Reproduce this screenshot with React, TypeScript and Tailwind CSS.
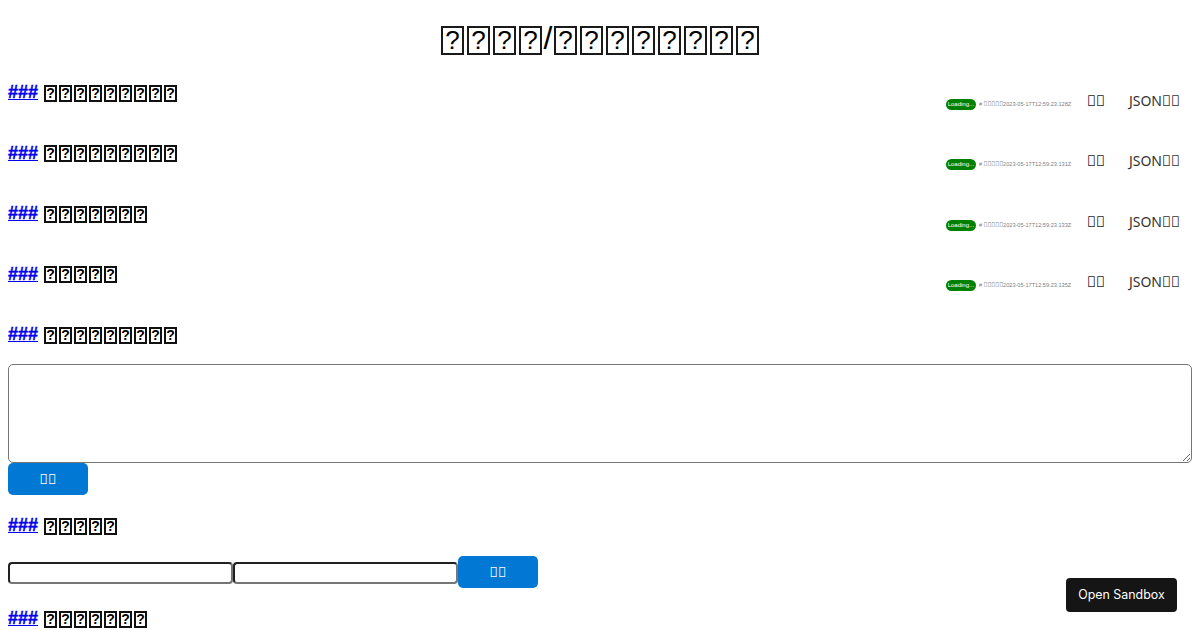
// The reference shows missing-glyph boxes, so the original wording can't be read.
const missing = (n: number) => '\uE000'.repeat(n)

function HeadBoxes({ count }: { count: number }) {
  return (
    <>
      {Array.from({ length: count }, (_, i) => (
        <span
          key={i}
          className="mx-px inline-block h-[17px] w-[13px] border-2 border-[#111111] bg-white text-center align-middle font-['Liberation_Sans',sans-serif] text-[14px] leading-[13px] font-bold text-black"
        >
          ?
        </span>
      ))}
    </>
  )
}

function TitleBoxes({ count }: { count: number }) {
  return (
    <>
      {Array.from({ length: count }, (_, i) => (
        <span
          key={i}
          className="mx-[1.5px] inline-block h-[29px] w-[23px] border-2 border-[#1a1a1a] bg-white text-center align-middle font-['Liberation_Sans',sans-serif] text-[26px] leading-[25px] font-normal text-black"
        >
          ?
        </span>
      ))}
    </>
  )
}

function Heading({ count, className = '' }: { count: number; className?: string }) {
  return (
    <h3 className={`font-['Liberation_Sans',sans-serif] text-[18px] leading-[23px] font-bold text-black ${className}`}>
      <a href="#" className="text-[#0000ee] underline [-webkit-text-stroke:0.4px_#0000ee]">###</a> <HeadBoxes count={count} />
    </h3>
  )
}

function Row({ count, time, offset }: { count: number; time: string; offset: string }) {
  return (
    <div className="flex h-[60.5px] items-start justify-between">
      <Heading count={count} />
      <div className={`flex items-baseline ${offset}`}>
        <span className="flex h-[11px] w-[30px] items-center justify-center rounded-full bg-[#008000] font-['Liberation_Sans',sans-serif] text-[6px] text-white">
          Loading...
        </span>
        <span className="ml-[3px] w-[96px] font-['Liberation_Sans',sans-serif] text-[5.6px] whitespace-nowrap text-[#808080]">
          # <span className="font-['Noto_Sans',sans-serif] text-[6.5px]">{missing(5)}</span>{time}
        </span>
        <button className="px-3 font-['Noto_Sans',sans-serif] text-[15px] text-[#262626]">{missing(2)}</button>
        <button className="px-3 font-['Noto_Sans',sans-serif] text-[14px] text-[#333333]">
          JSON<span className="text-[15px]">{missing(2)}</span>
        </button>
      </div>
    </div>
  )
}

function BlueButton() {
  return (
    <button className="h-8 w-20 shrink-0 rounded-[5px] bg-[#0078d4] font-['Noto_Sans',sans-serif] text-sm text-white">
      {missing(2)}
    </button>
  )
}

export default function App() {
  return (
    <div className="relative h-[630px] w-[1200px] overflow-hidden bg-white px-2 pt-[18px]">
      <h1 className="mb-[22px] text-center font-['Liberation_Sans',sans-serif] text-[32px] leading-[41px] font-light text-black">
        <TitleBoxes count={4} />/<TitleBoxes count={8} />
      </h1>
      <Row count={9} time="2023-05-17T12:59:23.128Z" offset="mt-[7.5px]" />
      <Row count={9} time="2023-05-17T12:59:23.131Z" offset="mt-[7px]" />
      <Row count={7} time="2023-05-17T12:59:23.133Z" offset="mt-[7.5px]" />
      <Row count={5} time="2023-05-17T12:59:23.135Z" offset="mt-[7px]" />
      <Heading count={9} />
      <textarea className="mt-[17.5px] block h-[99px] w-full rounded-[5px] border border-[#767676] bg-white" />
      <BlueButton />
      <Heading count={5} className="mt-[19.5px]" />
      <div className="mt-[18.5px] flex items-center">
        <input className="mt-[2px] h-[22px] w-[225px] rounded-[4px] border-2 border-[#767676] bg-white [border-style:inset]" />
        <input className="mt-[2px] h-[22px] w-[225px] rounded-[4px] border-2 border-[#767676] bg-white [border-style:inset]" />
        <BlueButton />
      </div>
      <Heading count={7} className="mt-[19.5px]" />
      <button className="absolute top-[578px] left-[1066px] h-[34px] w-[111px] rounded-[4px] bg-[#151515] font-['Inter',sans-serif] text-[12.4px] text-white">
        Open Sandbox
      </button>
    </div>
  )
}
